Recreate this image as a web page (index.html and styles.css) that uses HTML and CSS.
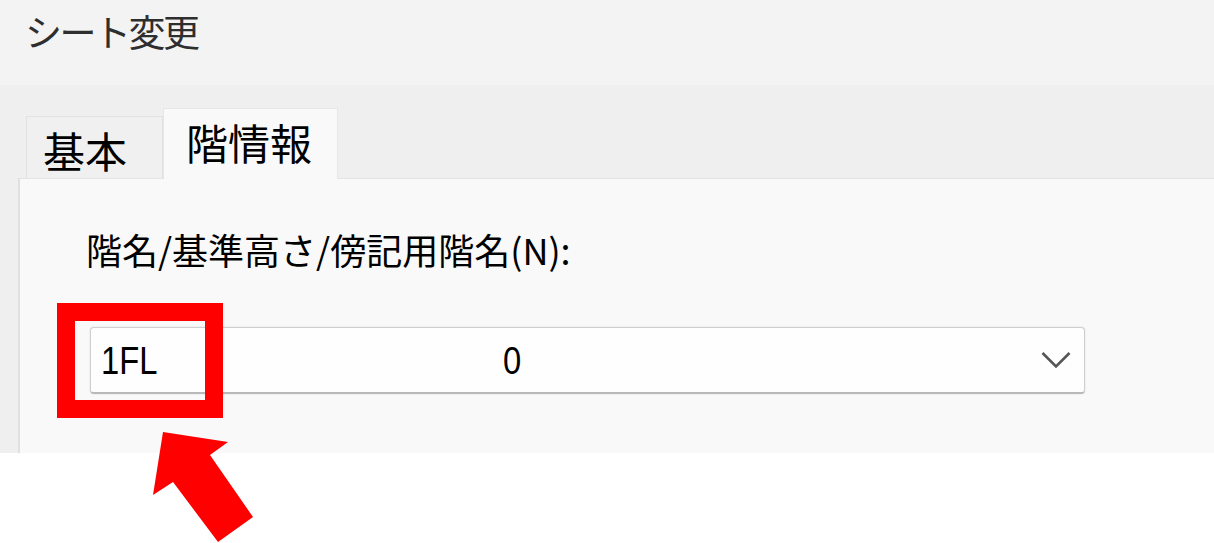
FILE: index.html
```html
<!DOCTYPE html>
<html lang="ja">
<head>
<meta charset="utf-8">
<title>シート変更</title>
<link rel="stylesheet" href="styles.css">
</head>
<body>
<div class="screen">
  <div class="window">
    <header class="titlebar"><span class="title">シート変更</span></header>
    <div class="dialog">
      <div class="tabs">
        <div class="tab">基本</div>
        <div class="tab active">階情報</div>
      </div>
      <div class="panel">
        <div class="field-label">階名/基準高さ/傍記用階名(N):</div>
        <div class="combo">
          <span class="cell cell-name"><span class="narrow">1FL</span></span>
          <span class="cell cell-height"><span class="narrow">0</span></span>
          <svg class="chevron" width="30" height="18" viewBox="0 0 30 18" aria-hidden="true">
            <polyline points="1.5,2 15,15.5 28.5,2" fill="none" stroke="#555" stroke-width="2.6" stroke-linejoin="miter"/>
          </svg>
        </div>
      </div>
    </div>
  </div>
  <div class="callout-box"></div>
  <svg class="callout-arrow" width="110" height="120" viewBox="150 430 110 120" aria-hidden="true">
    <polygon points="163,432 228,442 210,455 253,517 218,542 173,482 153,495" fill="#ff0000"/>
  </svg>
</div>
</body>
</html>
```
FILE: styles.css
```css
* { box-sizing: border-box; }
html, body { margin: 0; padding: 0; background: #ffffff; }
body { width: 1214px; height: 543px; overflow: hidden; font-family: "Noto Sans CJK JP", "Noto Sans", sans-serif; }

.screen { position: relative; width: 1214px; height: 543px; background: #ffffff; }

.window { height: 453px; display: flex; flex-direction: column; }

.titlebar {
  height: 85px;
  background: #f3f3f3;
  padding: 13px 0 0 25px;
}
.title {
  display: block;
  font-size: 37px;
  line-height: 1;
  letter-spacing: -2.5px;
  color: #2e2e2e;
}

.dialog {
  flex: 1;
  display: flex;
  flex-direction: column;
  background: #efefef;
  padding-left: 18px;
}

.tabs {
  height: 93px;
  display: flex;
  align-items: flex-end;
  padding-left: 8px;
}
.tab {
  width: 137px;
  height: 62px;
  background: #f0f0f0;
  border: 1px solid #e2e2e2;
  border-bottom: none;
  padding: 12px 0 0 16px;
  font-size: 42px;
  line-height: 1;
  color: #000;
}
.tab.active {
  width: 175px;
  height: 71px;
  margin-bottom: -1px;
  background: #f9f9f9;
  border-color: #e6e6e6;
  padding: 12px 0 0 22px;
  position: relative;
  z-index: 1;
}

.panel {
  flex: 1;
  background: #f9f9f9;
  border-top: 1px solid #e3e3e3;
  border-left: 2px solid #e0e0e0;
  padding: 52px 0 0 66px;
}

.field-label {
  font-size: 36px;
  line-height: 1;
  color: #000;
  white-space: nowrap;
}

.combo {
  margin: 60px 0 0 4px;
  width: 995px;
  height: 67px;
  background: #fefefe;
  border: 1px solid #cfcfcf;
  border-bottom: 2px solid #b9b9b9;
  border-radius: 4px;
  box-shadow: 0 0 2px rgba(0, 0, 0, 0.12);
  display: flex;
  align-items: center;
  padding-left: 10px;
  font-family: "Liberation Sans", sans-serif;
  font-size: 39px;
  color: #000;
}
.cell { line-height: 1; }
.narrow { display: inline-block; transform: scaleX(0.84); transform-origin: left center; }
.cell-name { width: 402px; }
.chevron { margin-left: auto; margin-right: 13px; }

.callout-box {
  position: absolute;
  left: 57px;
  top: 303px;
  width: 166px;
  height: 115px;
  border: 18px solid #ff0000;
}
.callout-arrow {
  position: absolute;
  left: 150px;
  top: 430px;
}
```
